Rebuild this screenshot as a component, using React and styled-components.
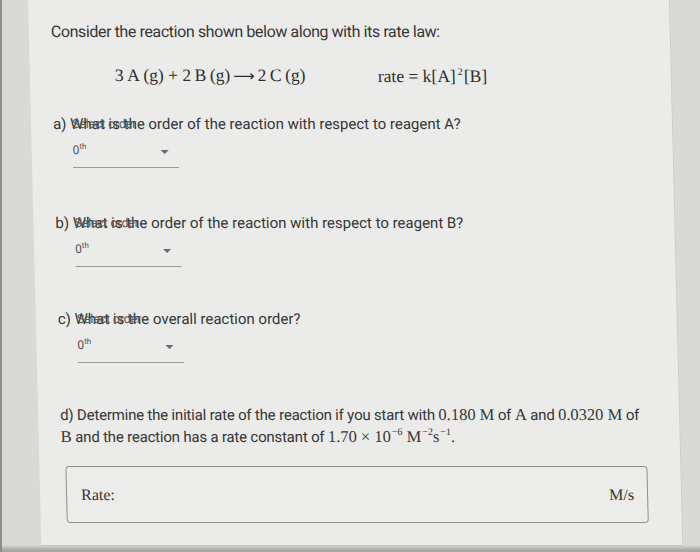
import React from "react";
import styled, { createGlobalStyle } from "styled-components";

const GlobalStyle = createGlobalStyle`
  html, body {
    margin: 0;
    padding: 0;
  }
  body {
    background: #d7d7d5;
    font-family: Roboto, "Liberation Sans", sans-serif;
    color: #363636;
    overflow: hidden;
  }
`;

const Screen = styled.div`
  width: 700px;
  height: 552px;
  box-sizing: border-box;
  display: flex;
  border-left: 2px solid #8e8e8c;
  background: linear-gradient(#d9d9d7 0, #d9d9d7 545px, #a8a8a6 550px);
  overflow: hidden;
`;

const Card = styled.main`
  margin-left: 26px;
  width: 642px;
  height: 546px;
  box-sizing: border-box;
  padding: 22px 0 0 22px;
  background: #ebebe9;
  border-right: 1px solid #cbcbc9;
  border-bottom: 1px solid #c2c2c0;
  transform: skewX(1.4deg);
  transform-origin: top left;
`;

const Intro = styled.p`
  margin: 0;
  font-size: 16px;
  line-height: 20px;
  letter-spacing: -0.4px;
`;

const Equation = styled.div`
  display: flex;
  align-items: center;
  margin-top: 22px;
  padding-left: 63px;
  font-family: "Liberation Serif", "DejaVu Serif", serif;
  font-size: 17.5px;
  line-height: 22px;
  color: #2e2e2e;
`;

const Reaction = styled.span`
  width: 263px;
  white-space: pre;
`;

const Arrow = styled.span`
  font-family: "DejaVu Sans", sans-serif;
  font-size: 15px;
  margin: 0 3px;
`;

const Sup = styled.sup`
  font-size: 10px;
  line-height: 0;
  vertical-align: 7px;
  margin: 0 1px 0 2px;
`;

const Question = styled.section`
  margin-top: ${p => p.gap}px;
`;

const QText = styled.p`
  margin: 0;
  font-size: 15px;
  line-height: 20px;
`;

const SelectBox = styled.div`
  position: relative;
  margin: 6px 0 0 19px;
  width: 106px;
  height: 20px;
  padding-bottom: 7px;
  display: flex;
  align-items: center;
  justify-content: space-between;
  border-bottom: 1px solid #9a9a98;
`;

const FloatLabel = styled.span`
  position: absolute;
  left: 0;
  top: -23px;
  font-size: 12.5px;
  line-height: 14px;
  letter-spacing: -0.2px;
  color: #5a5a5a;
`;

const Value = styled.span`
  font-size: 12px;
  color: #555;
`;

const Ord = styled.sup`
  font-size: 8px;
  line-height: 0;
  vertical-align: 5px;
`;

const Caret = styled.span`
  width: 0;
  height: 0;
  margin: 4px 10px 0 0;
  border-left: 4px solid transparent;
  border-right: 4px solid transparent;
  border-top: 4px solid #6a6a6a;
`;

const Select = () => (
  <SelectBox>
    <FloatLabel>Select order</FloatLabel>
    <Value>
      0<Ord>th</Ord>
    </Value>
    <Caret />
  </SelectBox>
);

const Long = styled.p`
  margin: 0;
  max-width: 588px;
  font-size: 15px;
  line-height: 22px;
  letter-spacing: -0.2px;
`;

const M = styled.span`
  font-family: "Liberation Serif", "DejaVu Serif", serif;
  font-size: 16.5px;
  letter-spacing: 0;
`;

const MSup = styled.sup`
  font-family: "Liberation Serif", serif;
  font-size: 10px;
  line-height: 0;
  vertical-align: 7px;
  margin-left: 1px;
`;

const AnswerBox = styled.div`
  margin: 18px 0 0 4px;
  width: 582px;
  height: 57px;
  box-sizing: border-box;
  padding: 0 13px 0 14px;
  display: flex;
  align-items: center;
  justify-content: space-between;
  border: 1px solid #8f8f8d;
  border-radius: 4px;
  background: #ececea;
  font-family: "Liberation Serif", "DejaVu Serif", serif;
  font-size: 16px;
  color: #333;
`;

const App = () => (
  <>
    <GlobalStyle />
    <Screen>
      <Card>
        <Intro>Consider the reaction shown below along with its rate law:</Intro>
        <Equation>
          <Reaction>
            3{"\u2009"}A{"\u2009"}(g) + 2{"\u2009"}B{"\u2009"}(g)
            <Arrow>⟶</Arrow>2{"\u2009"}C{"\u2009"}(g)
          </Reaction>
          <span>
            rate = k[A]<Sup>2</Sup>[B]
          </span>
        </Equation>

        <Question gap={27}>
          <QText>a) What is the order of the reaction with respect to reagent A?</QText>
          <Select />
        </Question>

        <Question gap={45}>
          <QText>b) What is the order of the reaction with respect to reagent B?</QText>
          <Select />
        </Question>

        <Question gap={42}>
          <QText>c) What is the overall reaction order?</QText>
          <Select />
        </Question>

        <Question gap={41}>
          <Long>
            d) Determine the initial rate of the reaction if you start with <M>0.180 M</M> of{" "}
            <M>A</M> and <M>0.0320 M</M> of <M>B</M> and the reaction has a rate constant of{" "}
            <M>
              1.70 × 10<MSup>−6</MSup> M<MSup>−2</MSup>s<MSup>−1</MSup>.
            </M>
          </Long>
          <AnswerBox>
            <span>Rate:</span>
            <span>M/s</span>
          </AnswerBox>
        </Question>
      </Card>
    </Screen>
  </>
);

export default App;
